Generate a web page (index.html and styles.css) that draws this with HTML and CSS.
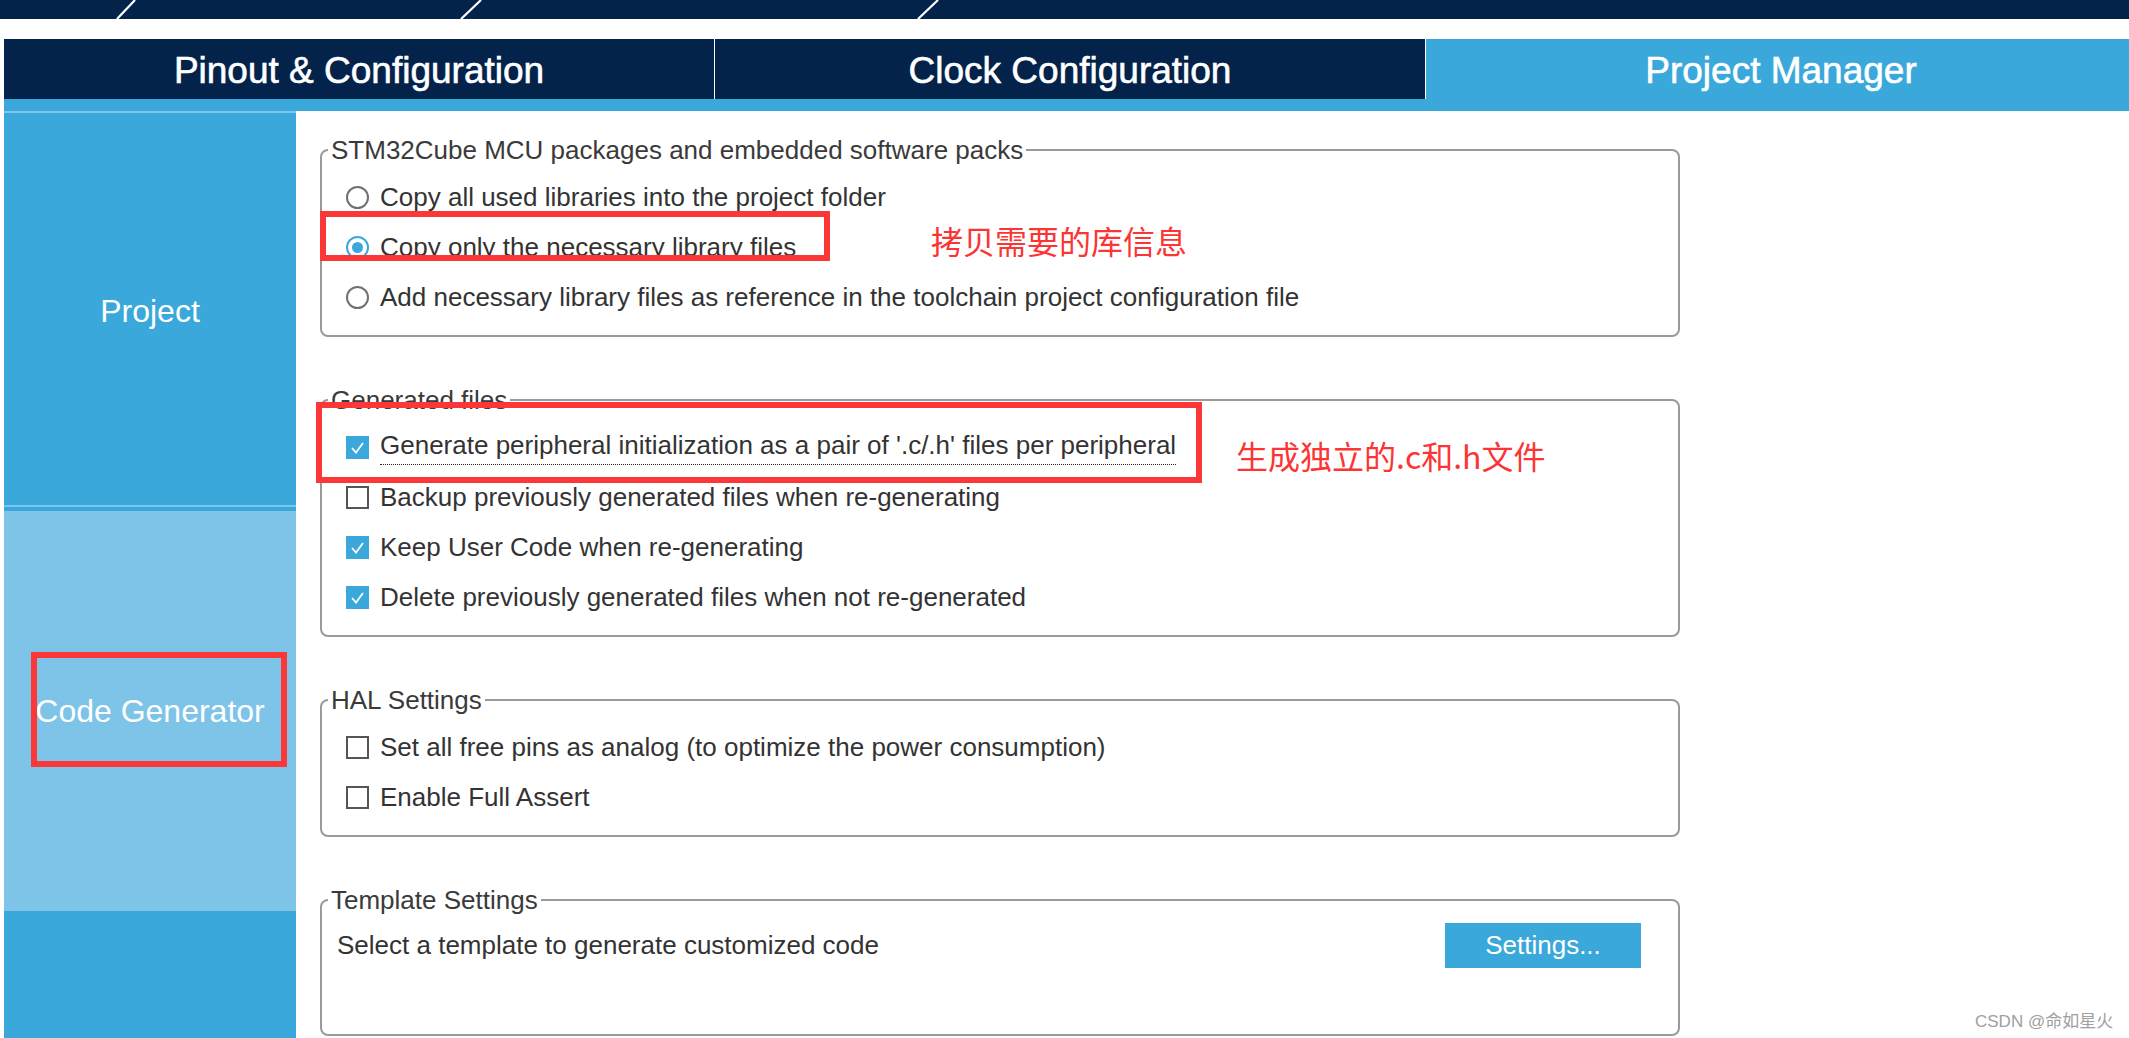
FILE: index.html
```html
<!DOCTYPE html>
<html lang="en">
<head>
<meta charset="utf-8">
<title>Project Manager - Code Generator</title>
<link rel="stylesheet" href="styles.css">
</head>
<body>
<div class="crumbs">
  <svg width="2129" height="19" viewBox="0 0 2129 19">
    <g stroke="#ffffff" stroke-width="2.2" fill="none">
      <line x1="117" y1="19" x2="135" y2="0"/>
      <line x1="461" y1="19" x2="481" y2="0"/>
      <line x1="918" y1="19" x2="938" y2="0"/>
    </g>
  </svg>
</div>

<nav class="tabs">
  <div class="tab">Pinout &amp; Configuration</div>
  <div class="tab">Clock Configuration</div>
  <div class="tab active">Project Manager</div>
</nav>
<div class="subbar"></div>

<div class="workspace">
  <aside class="sidebar">
    <div class="nav-item nav-project">Project</div>
    <div class="nav-sep"></div>
    <div class="nav-item nav-codegen">Code Generator</div>
    <div class="nav-item nav-rest"></div>
  </aside>

  <main class="main">
    <fieldset class="fs">
      <legend>STM32Cube MCU packages and embedded software packs</legend>
      <div class="fs-body">
        <div class="row"><span class="control radio"></span>Copy all used libraries into the project folder</div>
        <div class="row"><span class="control radio on"></span>Copy only the necessary library files</div>
        <div class="row"><span class="control radio"></span>Add necessary library files as reference in the toolchain project configuration file</div>
      </div>
    </fieldset>

    <fieldset class="fs">
      <legend>Generated files</legend>
      <div class="fs-body">
        <div class="row"><span class="control check on"><svg viewBox="0 0 23 23" width="23" height="23"><polyline points="6,12 10,16.5 17,7" fill="none" stroke="#fff" stroke-width="1.8"/></svg></span><span class="focus">Generate peripheral initialization as a pair of '.c/.h' files per peripheral</span></div>
        <div class="row"><span class="control check"></span>Backup previously generated files when re-generating</div>
        <div class="row"><span class="control check on"><svg viewBox="0 0 23 23" width="23" height="23"><polyline points="6,12 10,16.5 17,7" fill="none" stroke="#fff" stroke-width="1.8"/></svg></span>Keep User Code when re-generating</div>
        <div class="row"><span class="control check on"><svg viewBox="0 0 23 23" width="23" height="23"><polyline points="6,12 10,16.5 17,7" fill="none" stroke="#fff" stroke-width="1.8"/></svg></span>Delete previously generated files when not re-generated</div>
      </div>
    </fieldset>

    <fieldset class="fs">
      <legend>HAL Settings</legend>
      <div class="fs-body">
        <div class="row"><span class="control check"></span>Set all free pins as analog (to optimize the power consumption)</div>
        <div class="row"><span class="control check"></span>Enable Full Assert</div>
      </div>
    </fieldset>

    <fieldset class="fs fs-last">
      <legend>Template Settings</legend>
      <div class="fs-body template-body">
        <div class="template-row">
          <span>Select a template to generate customized code</span>
          <button class="btn" type="button">Settings...</button>
        </div>
      </div>
    </fieldset>
  </main>
</div>

<div class="mark mark-copy"></div>
<div class="mark mark-gen"></div>
<div class="mark mark-codegen"></div>
<div class="note note-copy">拷贝需要的库信息</div>
<div class="note note-gen">生成独立的.c和.h文件</div>
<div class="watermark">CSDN @命如星火</div>
</body>
</html>
```

FILE: styles.css
```css
html, body {
  margin: 0;
  padding: 0;
  background: #ffffff;
  overflow: hidden;
}

body {
  width: 2129px;
  height: 1038px;
  position: relative;
  font-family: "Liberation Sans", Arial, "Noto Sans CJK SC", sans-serif;
}

.crumbs {
  height: 19px;
  background: #03234b;
  overflow: hidden;
}

.crumbs svg {
  display: block;
}

.tabs {
  margin: 20px 0 0 4px;
  height: 60px;
  display: grid;
  grid-template-columns: 710px 710px 710px;
  column-gap: 1px;
  overflow: hidden;
}

.tab {
  background: #03234b;
  color: #ffffff;
  font-size: 37px;
  -webkit-text-stroke: 0.6px #ffffff;
  padding-top: 3px;
  box-sizing: border-box;
  display: flex;
  align-items: center;
  justify-content: center;
  white-space: nowrap;
}

.tab.active {
  background: #3aa8da;
}

.subbar {
  margin-left: 4px;
  height: 12px;
  background: #3aa8da;
}

.workspace {
  margin-left: 4px;
  height: 927px;
  display: flex;
}

.sidebar {
  width: 292px;
  flex: none;
  background: #3aa8da;
  display: flex;
  flex-direction: column;
}

.nav-item {
  color: #ffffff;
  font-size: 32px;
  display: flex;
  align-items: center;
  justify-content: center;
  white-space: nowrap;
}

.nav-project {
  height: 394px;
  flex: none;
  border-top: 2px solid #80c5e9;
  box-sizing: border-box;
  padding-top: 4px;
}

.nav-sep {
  height: 2px;
  flex: none;
  background: #80c5e9;
  margin-bottom: 4px;
}

.nav-codegen {
  height: 400px;
  flex: none;
  background: #7dc4e8;
}

.nav-rest {
  flex: 1;
}

.main {
  padding: 24px 0 0 24px;
}

.fs {
  width: 1360px;
  box-sizing: border-box;
  margin: 0 0 48px 0;
  padding: 0;
  min-width: 0;
  border: 2px solid #9a9a9a;
  border-radius: 8px;
}

.fs legend {
  font-size: 26px;
  line-height: 30px;
  color: #3a3a3a;
  padding: 0 3px;
  margin-left: 6px;
}

.fs-body {
  padding: 7px 24px 13px 24px;
}

.row {
  height: 50px;
  display: flex;
  align-items: center;
  font-size: 26px;
  color: #333333;
  white-space: nowrap;
}

.control {
  width: 23px;
  height: 23px;
  flex: none;
  box-sizing: border-box;
  margin-right: 11px;
}

.control svg {
  display: block;
}

.radio {
  border-radius: 50%;
  border: 2px solid #707070;
  background: #ffffff;
}

.radio.on {
  border-color: #3aa8da;
  display: flex;
  align-items: center;
  justify-content: center;
}

.radio.on::after {
  content: "";
  width: 11px;
  height: 11px;
  border-radius: 50%;
  background: #3aa8da;
}

.check {
  border: 2px solid #555555;
  background: #ffffff;
}

.check.on {
  border: none;
  background: #3aa8da;
}

.focus {
  border-bottom: 1px dotted #222222;
  padding-bottom: 3px;
}

.template-body {
  box-sizing: border-box;
  height: 119px;
  padding: 7px 37px 0 15px;
}

.template-row {
  height: 46px;
  display: flex;
  align-items: center;
  justify-content: space-between;
  font-size: 26px;
  color: #333333;
  white-space: nowrap;
}

.btn {
  width: 196px;
  height: 45px;
  border: none;
  background: #3aa8da;
  color: #ffffff;
  font-family: inherit;
  font-size: 26px;
  padding: 0;
}

/* annotation overlays */
.mark {
  position: absolute;
  box-sizing: border-box;
  border: 6px solid #fc3737;
}

.mark-copy {
  left: 320px;
  top: 211px;
  width: 510px;
  height: 50px;
}

.mark-gen {
  left: 316px;
  top: 402px;
  width: 886px;
  height: 81px;
}

.mark-codegen {
  left: 31px;
  top: 652px;
  width: 256px;
  height: 115px;
}

.note {
  position: absolute;
  color: #fc3434;
  font-family: "Noto Sans CJK SC", sans-serif;
  font-size: 32px;
  line-height: 32px;
  white-space: nowrap;
}

.note-copy {
  left: 931px;
  top: 224px;
}

.note-gen {
  left: 1236px;
  top: 439px;
}

.watermark {
  position: absolute;
  left: 1975px;
  top: 1012px;
  font-size: 17px;
  line-height: 20px;
  color: #a0a0a0;
  font-family: "Liberation Sans", Arial, "Noto Sans CJK SC", sans-serif;
  white-space: nowrap;
}
```
